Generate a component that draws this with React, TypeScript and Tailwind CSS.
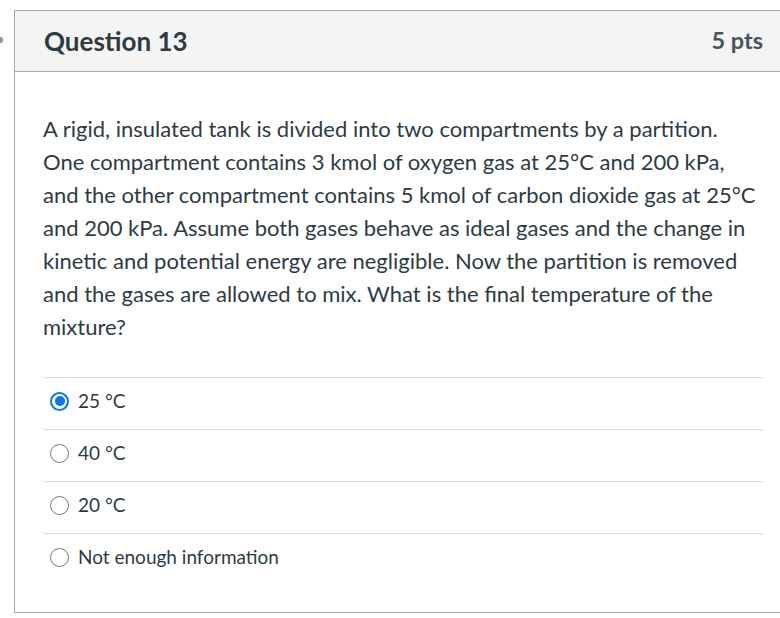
import React from "react";

const options = ["25 °C", "40 °C", "20 °C", "Not enough information"];

export default function App() {
  return (
    <div className="w-[780px] h-[618px] bg-white overflow-hidden relative" style={{ fontFamily: "Lato, 'Noto Sans', sans-serif" }}>
      <div className="absolute left-[-3px] top-[37px] w-[6px] h-[6px] rounded-full bg-[#8a96a0]" />
      <div className="ml-[14px] mt-[10px] w-[766px] border-l border-t border-b border-[#aaaaaa]">
        <div className="h-[61px] bg-[#f4f4f4] border-b border-[#aaaaaa] flex items-center justify-between pl-[29px] pr-[17px]">
          <span className="text-[26px] font-bold text-[#2d3b45] leading-none">Question 13</span>
          <span className="text-[23.5px] font-bold text-[#48535b] leading-none">5 pts</span>
        </div>
        <div className="pl-[28px] pr-[17px] pt-[40px] pb-[26px]">
          <p className="text-[22px] leading-[33px] text-[#2d3b45]">
            A rigid, insulated tank is divided into two compartments by a partition. One compartment contains 3 kmol of oxygen gas at 25°C and 200 kPa, and the other compartment contains 5 kmol of carbon dioxide gas at 25°C and 200 kPa. Assume both gases behave as ideal gases and the change in kinetic and potential energy are negligible. Now the partition is removed and the gases are allowed to mix. What is the final temperature of the mixture?
          </p>
          <div className="mt-[34px] border-t border-[#dddddd]">
            {options.map((o, i) => (
              <div key={o} className={"h-[52px] flex items-center pl-[7px] pb-[5px] " + (i < 3 ? "border-b border-[#dddddd]" : "")}>
                {i === 0 ? (
                  <span className="w-[19px] h-[19px] rounded-full border-2 border-[#0b74f1] flex items-center justify-center">
                    <span className="w-[10px] h-[10px] rounded-full bg-[#0b74f1]" />
                  </span>
                ) : (
                  <span className="w-[19px] h-[19px] rounded-full border border-[#767676]" />
                )}
                <span className="ml-[9px] text-[19px] text-[#2d3b45]">{o}</span>
              </div>
            ))}
          </div>
        </div>
      </div>
    </div>
  );
}
